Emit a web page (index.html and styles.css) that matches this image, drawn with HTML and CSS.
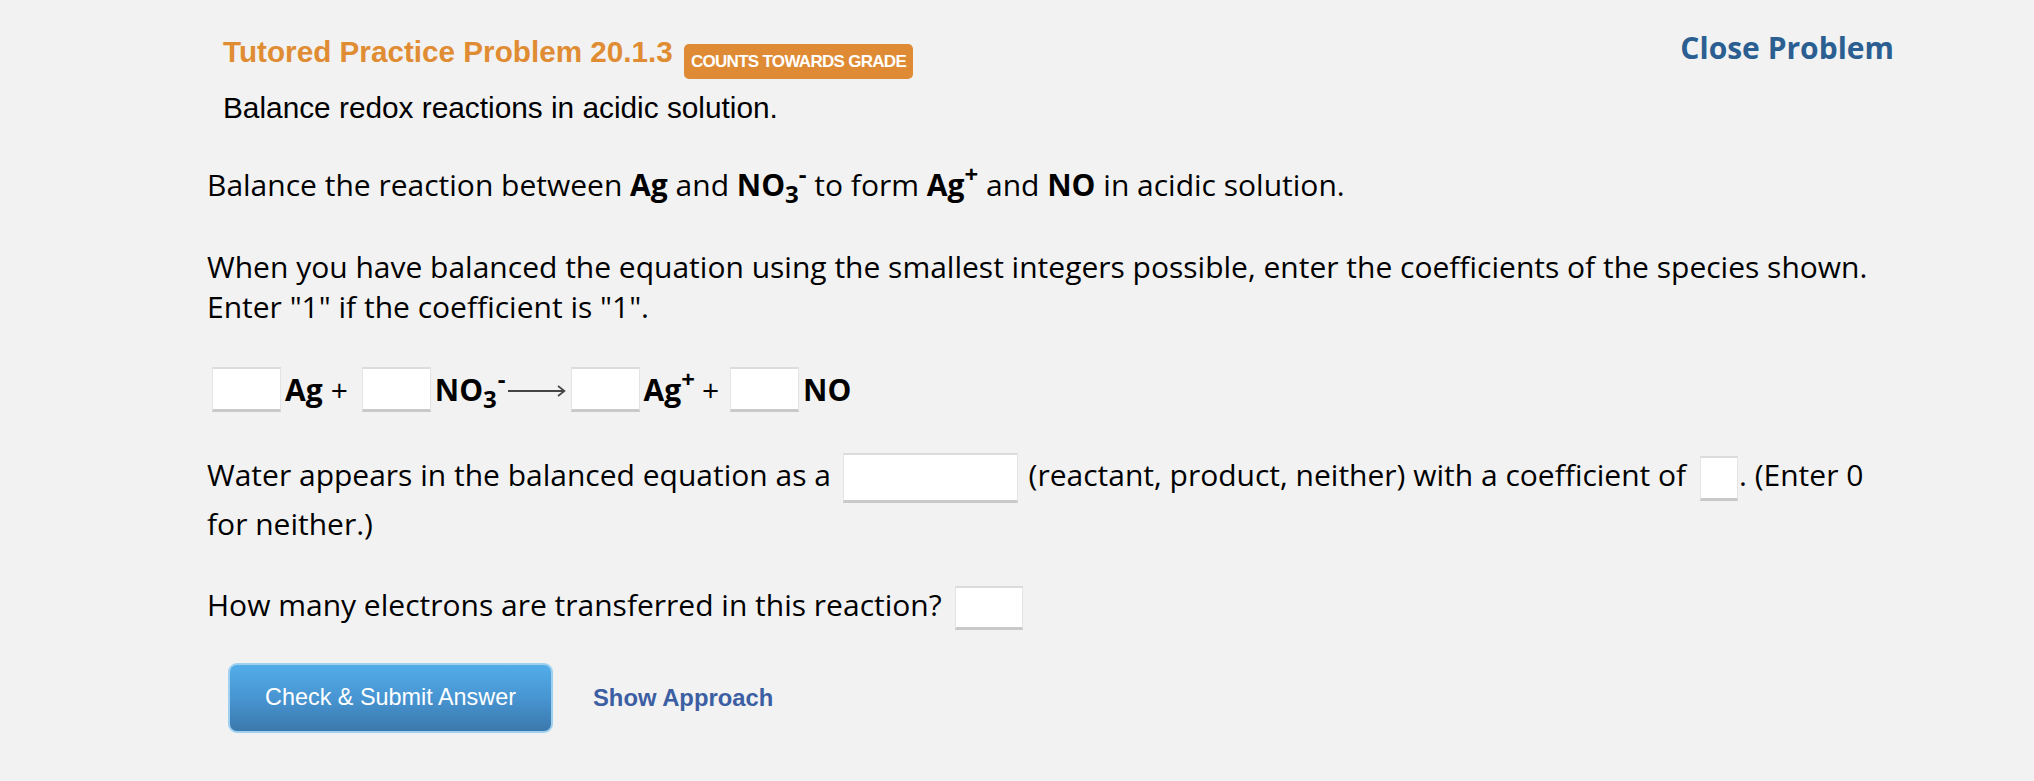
FILE: index.html
```html
<!DOCTYPE html>
<html lang="en">
<head>
<meta charset="utf-8">
<title>Tutored Practice Problem 20.1.3</title>
<link rel="stylesheet" href="styles.css">
</head>
<body>
<div class="page">
  <header class="head">
    <div class="head-left">
      <h1 class="title">Tutored Practice Problem 20.1.3<span class="badge">COUNTS TOWARDS GRADE</span></h1>
      <p class="subtitle">Balance redox reactions in acidic solution.</p>
    </div>
    <a class="close" href="#">Close Problem</a>
  </header>

  <main class="content">
    <p class="para p1">Balance the reaction between <b>Ag</b> and <b>NO<sub>3</sub><sup>-</sup></b> to form <b>Ag<sup>+</sup></b> and <b>NO</b> in acidic solution.</p>

    <p class="para p2">When you have balanced the equation using the smallest integers possible, enter the coefficients of the species shown. Enter "1" if the coefficient is "1".</p>

    <div class="equation">
      <span class="box"></span>
      <b class="sp">Ag</b>
      <span class="plus">+</span>
      <span class="box"></span>
      <b class="sp">NO<sub>3</sub><sup class="minus">-</sup></b>
      <svg class="arrow" width="60" height="14" viewBox="0 0 60 14"><path d="M1 7 H57" stroke="#444" stroke-width="2" fill="none"/><path d="M51 2 L57.5 7 L51 12" stroke="#444" stroke-width="1.6" fill="none"/></svg>
      <span class="box"></span>
      <b class="sp">Ag<sup>+</sup></b>
      <span class="plus plus2">+</span>
      <span class="box"></span>
      <b class="sp">NO</b>
    </div>

    <p class="para water">Water appears in the balanced equation as a <span class="box wide"></span> (reactant, product, neither) with a coefficient of <span class="box narrow"></span>. (Enter 0 for neither.)</p>

    <p class="para electrons">How many electrons are transferred in this reaction? <span class="box mid"></span></p>

    <div class="actions">
      <button class="submit" type="button">Check &amp; Submit Answer</button>
      <a class="approach" href="#">Show Approach</a>
    </div>
  </main>
</div>
</body>
</html>
```

FILE: styles.css
```css
html, body {
  margin: 0;
  padding: 0;
  background: #f2f2f2;
}

.page {
  width: 2034px;
  min-height: 781px;
}

.head {
  display: flex;
  justify-content: space-between;
  align-items: flex-start;
  padding: 32px 140px 0 223px;
}

.title {
  margin: 0;
  font-family: "Liberation Sans", Arial, sans-serif;
  font-weight: bold;
  font-size: 29.7px;
  line-height: 40px;
  color: #e08c33;
}

.badge {
  display: inline-block;
  margin-left: 11px;
  padding: 0 7px;
  height: 35px;
  line-height: 35px;
  border-radius: 5px;
  background: #df8b35;
  color: #ffffff;
  font-size: 17px;
  letter-spacing: -0.7px;
  font-weight: bold;
  vertical-align: -5px;
}

.subtitle {
  margin: 9px 0 0 0;
  font-family: "Liberation Sans", Arial, sans-serif;
  font-size: 29.8px;
  line-height: 40px;
  color: #000;
}

.close {
  margin-top: -4px;
  font-family: "Open Sans", sans-serif;
  font-weight: bold;
  font-size: 30px;
  line-height: 40px;
  color: #2b5f91;
  text-decoration: none;
}

.content {
  padding: 37px 0 0 207px;
  width: 1693px;
  font-family: "Open Sans", sans-serif;
  font-size: 30px;
  color: #000;
}

.para {
  margin: 0;
  line-height: 40px;
}

.para b {
  font-weight: bold;
}

sub, sup {
  font-size: 0.8em;
  line-height: 0;
  position: relative;
}

sub {
  vertical-align: -0.3em;
}

sup {
  vertical-align: 0.55em;
}

.p2 {
  margin-top: 42px;
}

.equation {
  display: flex;
  align-items: center;
  margin-top: 40px;
  padding-left: 5px;
  height: 45px;
}

.box {
  display: inline-block;
  box-sizing: border-box;
  width: 69px;
  height: 45px;
  background: #ffffff;
  border: 1px solid #e4e4e4;
  border-top: 2px solid #dcdcdc;
  border-bottom: 3px solid #c9c9c9;
  vertical-align: middle;
}

.sp {
  margin-left: 4px;
  font-weight: bold;
}

.plus {
  margin: 0 14px 0 8px;
}

.plus2 {
  margin-left: 7px;
  margin-right: 11px;
}

.minus {
  margin-left: 1px;
}

.arrow {
  display: block;
  margin: 0 4px 0 1px;
  position: relative;
  top: 1px;
}

.water {
  margin-top: 41px;
  line-height: 42px;
}

.box.wide {
  width: 175px;
  height: 50px;
  margin: 0 3px 0 4px;
}

.box.narrow {
  width: 38px;
  height: 45px;
  margin: 0 1px 0 6px;
}

.electrons {
  margin-top: 40px;
}

.box.mid {
  width: 68px;
  height: 44px;
  margin-left: 6px;
}

.actions {
  display: flex;
  align-items: center;
  margin-top: 33px;
  padding-left: 21px;
}

.submit {
  box-sizing: border-box;
  width: 325px;
  height: 70px;
  border: 2px solid #9fd0f0;
  border-radius: 9px;
  background: linear-gradient(to bottom, #52ade8 0%, #4795d2 50%, #3b78ac 100%);
  color: #ffffff;
  font-family: "Liberation Sans", Arial, sans-serif;
  font-size: 23.4px;
  cursor: pointer;
}

.approach {
  margin-left: 40px;
  font-family: "Liberation Sans", Arial, sans-serif;
  font-weight: bold;
  font-size: 23.8px;
  color: #3c5ea3;
  text-decoration: none;
}
```
